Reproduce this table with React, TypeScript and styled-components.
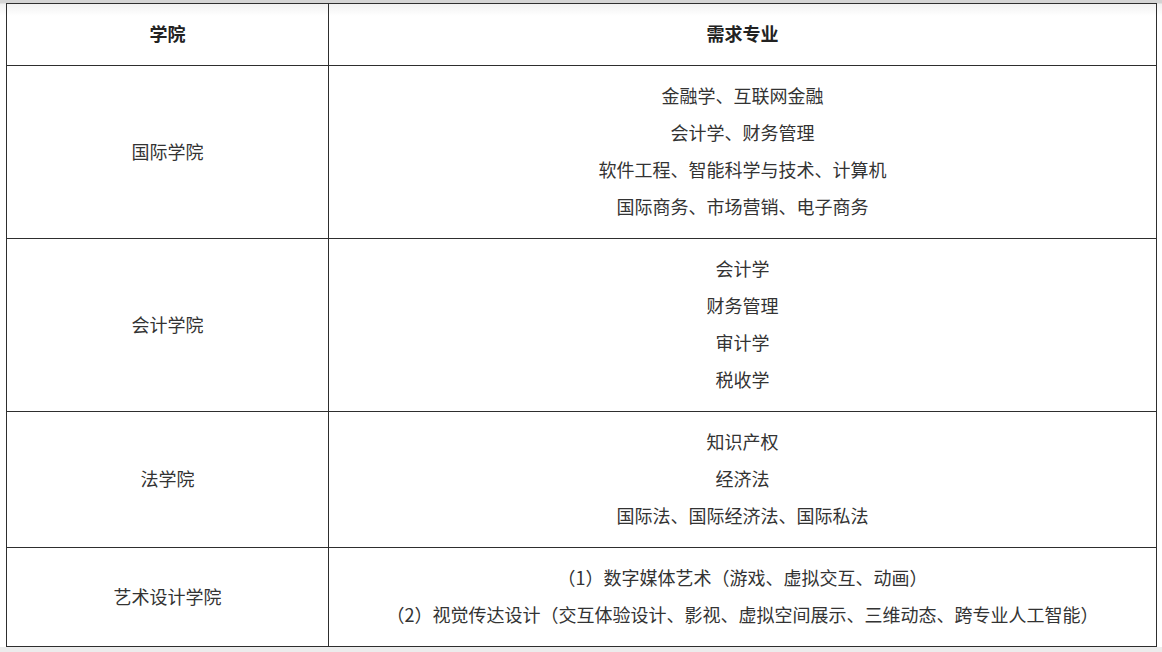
import React from "react";
import styled, { createGlobalStyle } from "styled-components";

const GlobalStyle = createGlobalStyle`
  html, body {
    margin: 0;
    padding: 0;
    background: #ececec;
  }
  body {
    font-family: "Noto Sans CJK SC", "Noto Sans", "Liberation Sans", sans-serif;
  }
`;

const Page = styled.div`
  background: linear-gradient(#d4d4d4 0px, #d4d4d4 3px, #f1f1f1 4px, #ffffff 16px) no-repeat, #ffffff;
  padding: 3px 5px 0 6px;
`;

const Table = styled.table`
  width: 1151px;
  border-collapse: collapse;
  table-layout: fixed;
  color: #333;
  font-size: 18px;
`;

const HeadCell = styled.th<{ $w?: number }>`
  border: 1px solid #2e2e2e;
  padding: 11px 0 13px;
  line-height: 37px;
  font-weight: 700;
  color: #222;
  text-align: center;
  ${(p) => (p.$w ? `width: ${p.$w}px;` : "")}
`;

const Cell = styled.td`
  border: 1px solid #2e2e2e;
  padding: 11px 0 13px;
  text-align: center;
  vertical-align: middle;
  line-height: 37px;
`;

const Line = styled.div`
  line-height: 37px;
  white-space: nowrap;
`;

const rows: { college: string; majors: string[] }[] = [
  {
    college: "国际学院",
    majors: [
      "金融学、互联网金融",
      "会计学、财务管理",
      "软件工程、智能科学与技术、计算机",
      "国际商务、市场营销、电子商务",
    ],
  },
  {
    college: "会计学院",
    majors: ["会计学", "财务管理", "审计学", "税收学"],
  },
  {
    college: "法学院",
    majors: ["知识产权", "经济法", "国际法、国际经济法、国际私法"],
  },
  {
    college: "艺术设计学院",
    majors: [
      "（1）数字媒体艺术（游戏、虚拟交互、动画）",
      "（2）视觉传达设计（交互体验设计、影视、虚拟空间展示、三维动态、跨专业人工智能）",
    ],
  },
];

export default function App() {
  return (
    <>
      <GlobalStyle />
      <Page>
        <Table>
          <thead>
            <tr>
              <HeadCell $w={321}>学院</HeadCell>
              <HeadCell>需求专业</HeadCell>
            </tr>
          </thead>
          <tbody>
            {rows.map((r) => (
              <tr key={r.college}>
                <Cell>{r.college}</Cell>
                <Cell>
                  {r.majors.map((m) => (
                    <Line key={m}>{m}</Line>
                  ))}
                </Cell>
              </tr>
            ))}
          </tbody>
        </Table>
      </Page>
    </>
  );
}
